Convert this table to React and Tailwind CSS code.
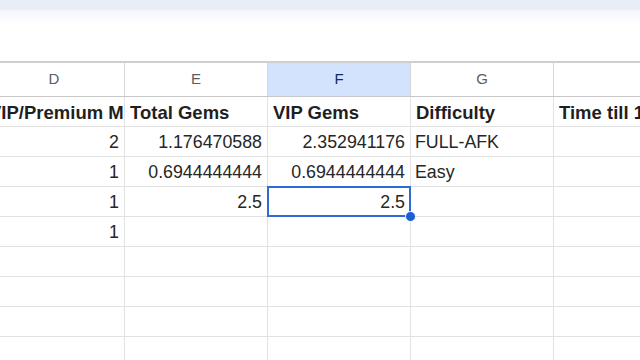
import React from "react";

const font = { fontFamily: '"Liberation Sans", Arial, sans-serif' };

const cols = [
  { letter: "D", w: "w-[141px]" },
  { letter: "E", w: "w-[143px]" },
  { letter: "F", w: "w-[143px]", active: true },
  { letter: "G", w: "w-[143px]" },
  { letter: "", w: "w-[160px]" },
];

const headers = ["VIP/Premium Multiplier", "Total Gems", "VIP Gems", "Difficulty", "Time till 100"];

const rows = [
  ["2", "1.176470588", "2.352941176", "FULL-AFK", ""],
  ["1", "0.6944444444", "0.6944444444", "Easy", ""],
  ["1", "2.5", "2.5", "", ""],
  ["1", "", "", "", ""],
  ["", "", "", "", ""],
  ["", "", "", "", ""],
  ["", "", "", "", ""],
  ["", "", "", "", ""],
  ["", "", "", "", ""],
];

function isNum(v) {
  return v !== "" && !isNaN(Number(v));
}

export default function App() {
  return (
    <div className="w-[640px] h-[360px] overflow-hidden bg-white" style={font}>
      {/* toolbar edge */}
      <div className="h-[10px] bg-[#e9eef6]" />
      <div className="h-[14px] bg-gradient-to-b from-[#f2f5fb] to-white" />
      <div className="h-[37px] bg-white" />

      <div className="ml-[-16px] w-[760px] border-t-2 border-[#cfcfcf]">
        {/* column letters */}
        <div className="flex h-[34px] border-b border-[#c7c7c7]">
          {cols.map((c, i) => (
            <div
              key={i}
              className={`${c.w} shrink-0 flex items-center justify-center border-r border-[#d6d6d6] text-[15px] ${
                c.active ? "bg-[#d3e3fd] text-[#0b2e63]" : "bg-white text-[#5a5e62]"
              }`}
            >
              {c.letter}
            </div>
          ))}
        </div>

        {/* header row */}
        <div className="flex h-[30px] border-b border-[#e2e2e2]">
          {cols.map((c, i) => (
            <div
              key={i}
              className={`${c.w} shrink-0 flex items-end pb-[3px] pl-[5px] overflow-hidden whitespace-nowrap border-r border-[#e2e2e2] text-[18.5px] leading-[20px] font-bold text-[#1f1f1f]`}
            >
              {headers[i]}
            </div>
          ))}
        </div>

        {/* data rows */}
        {rows.map((r, ri) => (
          <div key={ri} className="flex h-[30px] border-b border-[#e2e2e2]">
            {cols.map((c, ci) => (
              <div
                key={ci}
                className={`${c.w} shrink-0 relative flex items-end pb-[4px] px-[5px] whitespace-nowrap border-r border-[#e2e2e2] text-[17.8px] leading-[20px] text-[#262626] ${
                  isNum(r[ci]) ? "justify-end" : "justify-start pl-[4px]"
                }`}
              >
                <span>{r[ci]}</span>
                {ri === 2 && ci === 2 && (
                  <>
                    <div className="absolute left-[-1px] top-[-1px] right-[-1px] bottom-[-1px] border-2 border-[#2f6bd6] pointer-events-none" />
                    <div className="absolute right-[-6px] bottom-[-6px] w-[11px] h-[11px] rounded-full bg-[#1b5fd1] border border-white z-10" />
                  </>
                )}
              </div>
            ))}
          </div>
        ))}
      </div>
    </div>
  );
}
